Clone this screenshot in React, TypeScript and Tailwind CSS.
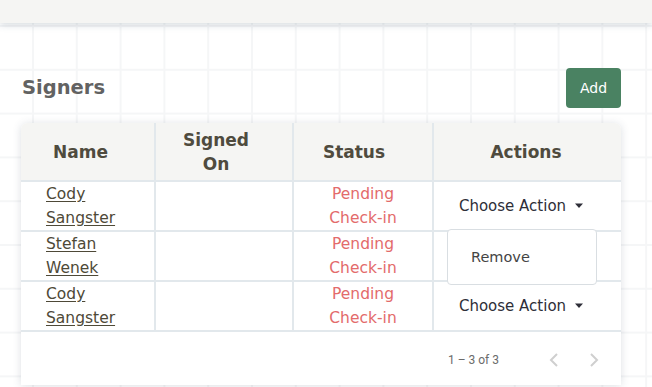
import React from 'react';

const signers = [
  { first: 'Cody', last: 'Sangster', signedOn: '', status: 'Pending Check-in' },
  { first: 'Stefan', last: 'Wenek', signedOn: '', status: 'Pending Check-in' },
  { first: 'Cody', last: 'Sangster', signedOn: '', status: 'Pending Check-in' },
];

const Caret = () => (
  <svg width="10" height="6" viewBox="0 0 10 6" className="ml-[8px] inline-block">
    <path d="M1 0.5h8L5 5z" fill="#2e2e38" />
  </svg>
);

const ChevronLeft = () => (
  <svg width="10" height="16" viewBox="0 0 10 16">
    <path d="M8 2L2 8l6 6" stroke="#cfcfcf" strokeWidth="2" fill="none" />
  </svg>
);

const ChevronRight = () => (
  <svg width="10" height="16" viewBox="0 0 10 16">
    <path d="M2 2l6 6-6 6" stroke="#cfcfcf" strokeWidth="2" fill="none" />
  </svg>
);

const App = () => {
  return (
    <div className="min-h-screen bg-white bg-[linear-gradient(to_right,#f5f6f7_2px,transparent_2px),linear-gradient(to_bottom,#f5f6f7_2px,transparent_2px)] bg-[size:43.8px_43.8px] bg-[position:32px_25px] font-['DejaVu_Sans',sans-serif]">
      <div className="h-[23px] bg-[#f5f5f3] shadow-[0_2px_7px_rgba(70,90,110,0.22)]" />
      <div className="pl-[21px] pr-[31px] pt-[45px]">
        <div className="flex items-center justify-between">
          <h2 className="pl-px text-[19.5px] font-semibold text-[#626262]">Signers</h2>
          <button className="h-10 w-[55px] rounded bg-[#4a8262] text-[14px] text-white">Add</button>
        </div>
        <div className="relative mt-[15px] rounded-t-md bg-white shadow-[0_1px_8px_rgba(60,80,100,0.18)]">
          <table className="w-full table-fixed border-collapse">
            <colgroup>
              <col className="w-[134px]" />
              <col className="w-[138px]" />
              <col className="w-[140px]" />
              <col />
            </colgroup>
            <thead>
              <tr className="h-[58px] border-b-2 border-[#e2e8ec] bg-[#f5f5f3] text-[17px] leading-6 text-[#4f4b3e]">
                <th className="rounded-tl-md border-r-2 border-[#e2e8ec] pr-[14px] font-semibold">Name</th>
                <th className="border-r-2 border-[#e2e8ec] pl-6 pr-10 font-semibold">Signed On</th>
                <th className="border-r-2 border-[#e2e8ec] pr-[18px] font-semibold">Status</th>
                <th className="rounded-tr-md pr-[3px] font-semibold">Actions</th>
              </tr>
            </thead>
            <tbody className="text-[15.5px] leading-6">
              {signers.map((s, i) => (
                <tr key={i} className="h-[50px] border-b-2 border-[#e2e8ec]">
                  <td className="border-r-2 border-[#e2e8ec] pl-[25px] align-middle">
                    <a href="#" className="text-[#4e4937] underline underline-offset-2">
                      {s.first}
                      <br />
                      {s.last}
                    </a>
                  </td>
                  <td className="border-r-2 border-[#e2e8ec]">{s.signedOn}</td>
                  <td className="border-r-2 border-[#e2e8ec] text-center text-[#e36b6b]">
                    Pending
                    <br />
                    Check-in
                  </td>
                  <td className="relative pr-[12px] text-center text-[15px] text-[#2e2e38]">
                    {i !== 1 && (
                      <span className="inline-flex items-center">
                        Choose Action
                        <Caret />
                      </span>
                    )}
                    {i === 0 && (
                      <div className="absolute left-[13px] top-[47px] z-10 h-[56px] w-[150px] rounded border border-[#d9dee2] bg-white pl-[23px] text-left text-[14.5px] leading-[54px] text-[#444]">
                        Remove
                      </div>
                    )}
                  </td>
                </tr>
              ))}
            </tbody>
          </table>
          <div className="flex h-[53px] items-center justify-end pr-[22px] pt-[3px] font-['Roboto',sans-serif] text-[12px] text-[#6b6b6b]">
            <span className="mr-[50px]">1 – 3 of 3</span>
            <div className="flex gap-[30px]">
              <ChevronLeft />
              <ChevronRight />
            </div>
          </div>
        </div>
      </div>
    </div>
  );
};

export default App;
